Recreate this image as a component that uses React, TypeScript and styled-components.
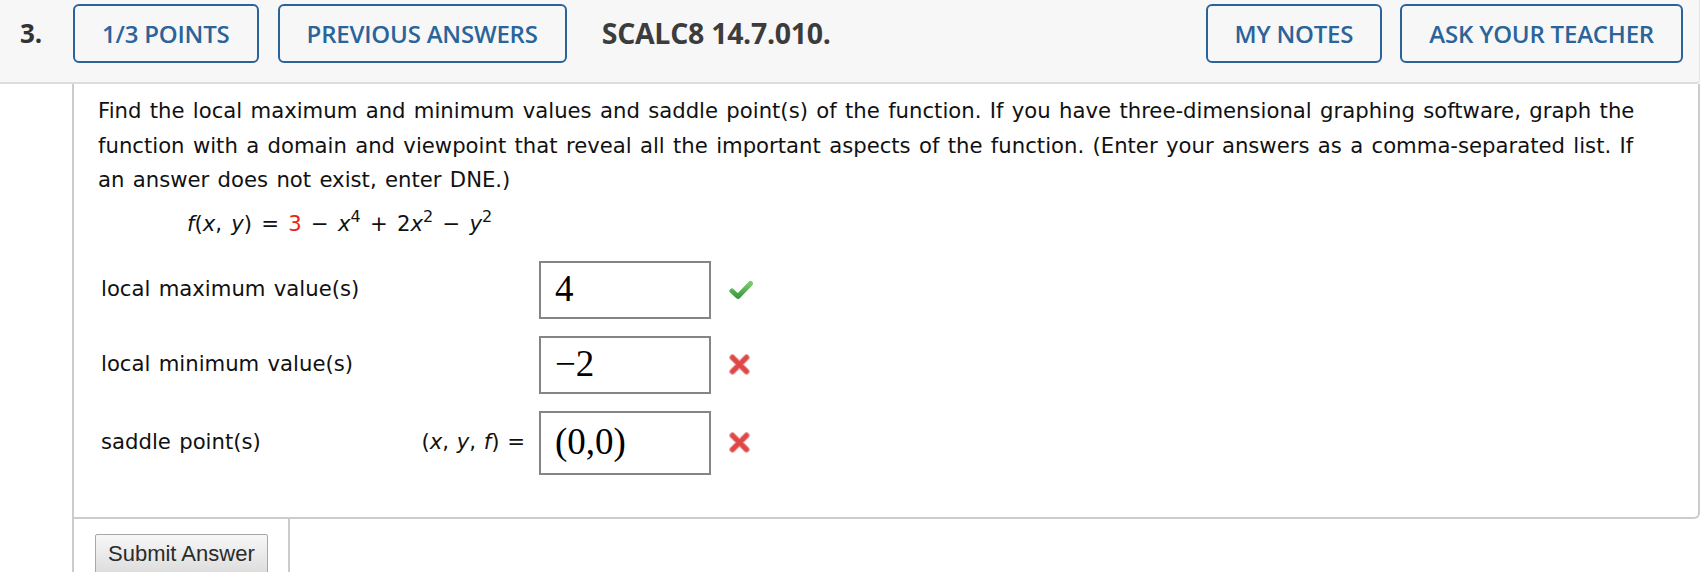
import React from "react";
import styled, { createGlobalStyle } from "styled-components";

const GlobalStyle = createGlobalStyle`
  html, body { margin: 0; padding: 0; background: #ffffff; }
  body { font-family: "DejaVu Sans", Verdana, sans-serif; color: #111; }
`;

const Page = styled.div`
  width: 1704px;
  height: 572px;
  overflow: hidden;
`;

const Header = styled.header`
  box-sizing: border-box;
  width: 1700px;
  height: 84px;
  display: flex;
  align-items: flex-start;
  padding: 4px 16px 0 20px;
  background: #f7f7f7;
  border-bottom: 2px solid #dcdcdc;
  border-right: 1px solid #e4e4e4;
  border-bottom-right-radius: 4px;
`;

const QNumber = styled.div`
  width: 53px;
  height: 59px;
  line-height: 59px;
  font-family: "Open Sans", "Liberation Sans", sans-serif;
  font-weight: 700;
  font-size: 26px;
  color: #333;
`;

const HeaderButton = styled.div<{ $gap?: number }>`
  box-sizing: border-box;
  height: 59px;
  display: flex;
  align-items: center;
  padding: 0 27px;
  margin-left: ${(p) => p.$gap ?? 0}px;
  border: 2px solid #28639a;
  border-radius: 6px;
  font-family: "Open Sans", "Liberation Sans", sans-serif;
  font-weight: 600;
  font-size: 24px;
  color: #2a6499;
  letter-spacing: -0.2px;
  white-space: nowrap;
`;

const Title = styled.div`
  height: 59px;
  line-height: 59px;
  margin-left: 35px;
  font-family: "Open Sans", "Liberation Sans", sans-serif;
  font-weight: 700;
  font-size: 28.5px;
  color: #3c3c3c;
  letter-spacing: -0.3px;
`;

const Spacer = styled.div`
  flex: 1;
`;

const Content = styled.section`
  box-sizing: border-box;
  width: 1628px;
  margin-left: 72px;
  padding: 10px 24px 42px 24px;
  border-left: 2px solid #cccccc;
  border-right: 2px solid #cccccc;
  border-bottom: 2px solid #cccccc;
  border-bottom-right-radius: 6px;
  font-size: 21.2px;
  line-height: 34.5px;
  word-spacing: 1.6px;
`;

const Question = styled.p`
  margin: 0;
  white-space: nowrap;
`;

const Formula = styled.div`
  margin: 9px 0 0 89px;
  line-height: 34px;
  word-spacing: 2.5px;
`;

const Var = styled.i`
  font-style: italic;
`;

const Given = styled.span`
  color: #e8231c;
`;

const Sup = styled.sup`
  font-size: 16px;
  line-height: 0;
  vertical-align: 9px;
`;

const Row = styled.div<{ $top: number }>`
  display: flex;
  align-items: center;
  margin-top: ${(p) => p.$top}px;
`;

const Label = styled.div`
  width: 300px;
  padding-left: 3px;
  box-sizing: border-box;
`;

const Prefix = styled.div`
  width: 127px;
  margin-right: 14px;
  text-align: right;
  white-space: nowrap;
  word-spacing: 1px;
`;

const AnswerBox = styled.div<{ $h: number }>`
  box-sizing: border-box;
  width: 172px;
  height: ${(p) => p.$h}px;
  display: flex;
  align-items: center;
  padding-left: 14px;
  border: 2px solid #858585;
  background: #fff;
  font-family: "Liberation Serif", "DejaVu Serif", serif;
  font-size: 37px;
  color: #000;
  word-spacing: 0;
`;

const Mark = styled.div`
  margin-left: 17px;
  display: flex;
  align-items: center;
`;

const SubmitBar = styled.div`
  box-sizing: border-box;
  width: 218px;
  height: 60px;
  margin-left: 72px;
  padding: 15px 0 0 21px;
  border-left: 2px solid #cccccc;
  border-right: 2px solid #cccccc;
`;

const SubmitButton = styled.button`
  box-sizing: border-box;
  height: 40px;
  padding: 0 12px;
  border: 1px solid #a7a7a7;
  border-radius: 2px;
  background: linear-gradient(#f7f7f7, #dddddd);
  font-family: "Liberation Sans", Arial, sans-serif;
  font-size: 22px;
  color: #2b2b2b;
`;

const Check = () => (
  <svg width="26" height="22" viewBox="0 0 26 22">
    <defs>
      <linearGradient id="cg" x1="0" y1="0" x2="0" y2="1">
        <stop offset="0" stopColor="#7cc66e" />
        <stop offset="1" stopColor="#3f9b3f" />
      </linearGradient>
    </defs>
    <path
      d="M4 12 L10 17.5 L22.5 4.5"
      fill="none"
      stroke="url(#cg)"
      strokeWidth="5"
      strokeLinecap="round"
      strokeLinejoin="round"
    />
  </svg>
);

const Cross = () => (
  <svg width="23" height="23" viewBox="0 0 23 23">
    <path
      d="M4.5 4.5 L18.5 18.5 M18.5 4.5 L4.5 18.5"
      fill="none"
      stroke="#f29a9a"
      strokeWidth="6.5"
      strokeLinecap="round"
    />
    <path
      d="M4.5 4.5 L18.5 18.5 M18.5 4.5 L4.5 18.5"
      fill="none"
      stroke="#e04848"
      strokeWidth="4.5"
      strokeLinecap="round"
    />
  </svg>
);

export default function App() {
  return (
    <Page>
      <GlobalStyle />
      <Header>
        <QNumber>3.</QNumber>
        <HeaderButton>1/3 POINTS</HeaderButton>
        <HeaderButton $gap={19}>PREVIOUS ANSWERS</HeaderButton>
        <Title>SCALC8 14.7.010.</Title>
        <Spacer />
        <HeaderButton>MY NOTES</HeaderButton>
        <HeaderButton $gap={18}>ASK YOUR TEACHER</HeaderButton>
      </Header>
      <Content>
        <Question>
          Find the local maximum and minimum values and saddle point(s) of the function. If you have three-dimensional graphing software, graph the
          <br />
          function with a domain and viewpoint that reveal all the important aspects of the function. (Enter your answers as a comma-separated list. If
          <br />
          an answer does not exist, enter DNE.)
        </Question>
        <Formula>
          <Var>f</Var>(<Var>x</Var>, <Var>y</Var>) = <Given>3</Given> − <Var>x</Var>
          <Sup>4</Sup> + 2<Var>x</Var>
          <Sup>2</Sup> − <Var>y</Var>
          <Sup>2</Sup>
        </Formula>
        <Row $top={20}>
          <Label>local maximum value(s)</Label>
          <Prefix />
          <AnswerBox $h={58}>4</AnswerBox>
          <Mark>
            <Check />
          </Mark>
        </Row>
        <Row $top={17}>
          <Label>local minimum value(s)</Label>
          <Prefix />
          <AnswerBox $h={58}>−2</AnswerBox>
          <Mark>
            <Cross />
          </Mark>
        </Row>
        <Row $top={17}>
          <Label>saddle point(s)</Label>
          <Prefix>
            (<Var>x</Var>, <Var>y</Var>, <Var>f</Var>) =
          </Prefix>
          <AnswerBox $h={64}>(0,0)</AnswerBox>
          <Mark>
            <Cross />
          </Mark>
        </Row>
      </Content>
      <SubmitBar>
        <SubmitButton>Submit Answer</SubmitButton>
      </SubmitBar>
    </Page>
  );
}
